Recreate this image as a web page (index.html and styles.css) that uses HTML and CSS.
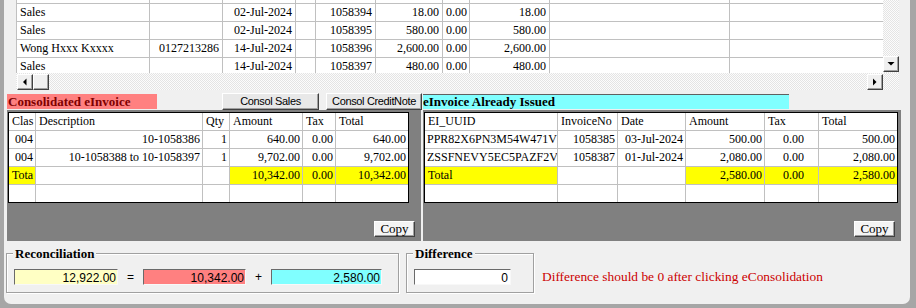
FILE: index.html
```html
<!DOCTYPE html>
<html>
<head>
<meta charset="utf-8">
<link rel="stylesheet" href="styles.css">
</head>
<body>
<div class="window">
  <div class="top">
    <div class="tgrid">
      <div class="rows">
        <div class="trow part"><div></div><div></div><div></div><div></div><div></div><div></div><div></div><div></div><div></div><div></div></div>
        <div class="trow"><div>Sales</div><div class="r"></div><div class="r">02-Jul-2024</div><div></div><div class="r">1058394</div><div class="r">18.00</div><div class="r">0.00</div><div class="r">18.00</div><div></div><div></div></div>
        <div class="trow"><div>Sales</div><div class="r"></div><div class="r">02-Jul-2024</div><div></div><div class="r">1058395</div><div class="r">580.00</div><div class="r">0.00</div><div class="r">580.00</div><div></div><div></div></div>
        <div class="trow"><div>Wong Hxxx Kxxxx</div><div class="r">0127213286</div><div class="r">14-Jul-2024</div><div></div><div class="r">1058396</div><div class="r">2,600.00</div><div class="r">0.00</div><div class="r">2,600.00</div><div></div><div></div></div>
        <div class="trow"><div>Sales</div><div class="r"></div><div class="r">14-Jul-2024</div><div></div><div class="r">1058397</div><div class="r">480.00</div><div class="r">0.00</div><div class="r">480.00</div><div></div><div></div></div>
      </div>
      <div class="vscroll">
        <div class="sbtn"><svg width="14" height="14" viewBox="0 0 14 14"><polygon points="3.5,5 10.5,5 7,8.5" fill="#000"/></svg></div>
      </div>
      <div class="hscroll">
        <div class="sbtn"><svg width="14" height="14" viewBox="0 0 14 14"><polygon points="8.5,3.5 8.5,10.5 5,7" fill="#000"/></svg></div>
        <div class="sbtn thumb"></div>
        <div class="track"></div>
        <div class="sbtn"><svg width="14" height="14" viewBox="0 0 14 14"><polygon points="5,3.5 5,10.5 8.5,7" fill="#000"/></svg></div>
      </div>
      <div class="corner"></div>
    </div>
  </div>

  <div class="labels">
    <div class="label red">Consolidated eInvoice</div>
    <div class="btn btn1">Consol Sales</div>
    <div class="btn btn2">Consol CreditNote</div>
    <div class="label cyan">eInvoice Already Issued</div>
  </div>

  <div class="panels">
    <div class="panel left">
      <div class="grid g1">
        <div class="grow head"><div>Clas</div><div>Description</div><div>Qty</div><div>Amount</div><div>Tax</div><div>Total</div></div>
        <div class="grow"><div class="r">004</div><div class="r">10-1058386</div><div class="r">1</div><div class="r">640.00</div><div class="r">0.00</div><div class="r">640.00</div></div>
        <div class="grow"><div class="r">004</div><div class="r">10-1058388 to 10-1058397</div><div class="r">1</div><div class="r">9,702.00</div><div class="r">0.00</div><div class="r">9,702.00</div></div>
        <div class="grow"><div class="y">Tota</div><div></div><div></div><div class="r y">10,342.00</div><div class="r y">0.00</div><div class="r y">10,342.00</div></div>
        <div class="grow last"><div></div><div></div><div></div><div></div><div></div><div></div></div>
      </div>
      <div class="copy">Copy</div>
    </div>
    <div class="panel right">
      <div class="grid g2">
        <div class="grow head"><div>EI_UUID</div><div>InvoiceNo</div><div>Date</div><div>Amount</div><div>Tax</div><div>Total</div></div>
        <div class="grow"><div class="uuid">PPR82X6PN3M54W471V</div><div class="r">1058385</div><div class="r">03-Jul-2024</div><div class="r">500.00</div><div class="r tax">0.00</div><div class="r">500.00</div></div>
        <div class="grow"><div class="uuid">ZSSFNEVY5EC5PAZF2V.</div><div class="r">1058387</div><div class="r">01-Jul-2024</div><div class="r">2,080.00</div><div class="r tax">0.00</div><div class="r">2,080.00</div></div>
        <div class="grow"><div class="y">Total</div><div></div><div></div><div class="r y">2,580.00</div><div class="r y tax">0.00</div><div class="r y">2,580.00</div></div>
        <div class="grow last"><div></div><div></div><div></div><div></div><div></div><div></div></div>
      </div>
      <div class="copy">Copy</div>
    </div>
  </div>

  <div class="bottom">
    <fieldset class="box recon">
      <legend>Reconciliation</legend>
      <div class="inrow">
        <div class="field f-yellow">12,922.00</div>
        <div class="op">=</div>
        <div class="field f-red">10,342.00</div>
        <div class="op">+</div>
        <div class="field f-cyan">2,580.00</div>
      </div>
    </fieldset>
    <fieldset class="box diff">
      <legend>Difference</legend>
      <div class="inrow">
        <div class="field f-white">0</div>
      </div>
    </fieldset>
    <div class="msg">Difference should be 0 after clicking eConsolidation</div>
  </div>
</div>
</body>
</html>
```

FILE: styles.css
```css
html, body {
  margin: 0;
  padding: 0;
}
body {
  width: 916px;
  height: 308px;
  overflow: hidden;
  background: #a6a6a6;
}
.window {
  margin-left: 4px;
  width: 906px;
  height: 304px;
  background: #f0f0f0;
  border-radius: 0 0 7px 7px;
  font-family: "Liberation Serif", "Times New Roman", serif;
  font-size: 12px;
  color: #000;
  overflow: hidden;
}

/* ---------- top list ---------- */
.top {
  height: 90px;
}
.tgrid {
  margin-left: 12px;
  display: grid;
  grid-template-columns: 867px 16px;
  grid-template-rows: 73px 17px;
}
.rows {
  background: #fff;
  border-left: 1px solid #c0c0c0;
  overflow: hidden;
}
.trow {
  display: grid;
  grid-template-columns: 133px 73px 73px 20px 60px 67px 27px 80px 180px 153px;
  height: 18px;
}
.trow.part {
  height: 4px;
}
.trow > div {
  box-sizing: border-box;
  border-right: 1px solid #c0c0c0;
  border-bottom: 1px solid #c0c0c0;
  padding: 0 3px;
  line-height: 17px;
  white-space: nowrap;
  overflow: hidden;
}
.trow > div:last-child {
  border-right: none;
}
.r {
  text-align: right;
}
.vscroll, .hscroll, .corner {
  background: repeating-conic-gradient(#e4e4e4 0 25%, #fcfcfc 0 50%) 0 0 / 2px 2px;
}
.vscroll {
  display: flex;
  flex-direction: column;
  justify-content: flex-end;
  padding-bottom: 1px;
  box-sizing: border-box;
}
.hscroll {
  display: flex;
  padding: 1px 0 0 1px;
  box-sizing: border-box;
}
.hscroll .track {
  flex: 1;
}
.sbtn {
  box-sizing: border-box;
  width: 16px;
  height: 16px;
  background: #f0f0f0;
  border: 1px solid;
  border-color: #fff #404040 #404040 #fff;
  box-shadow: inset -1px -1px 0 #a0a0a0;
  display: flex;
}
.sbtn svg {
  display: block;
}

/* ---------- labels ---------- */
.labels {
  display: flex;
  align-items: flex-start;
  height: 20px;
}
.label {
  box-sizing: border-box;
  height: 15px;
  margin-top: 4px;
  font-weight: bold;
  font-size: 13px;
  line-height: 15px;
  white-space: nowrap;
  overflow: hidden;
}
.label.red {
  margin-left: 3px;
  width: 150px;
  background: #ff8080;
  color: #800000;
  padding-left: 1px;
}
.label.cyan {
  margin-left: 1px;
  width: 366px;
  background: #80ffff;
  color: #000;
  border-top: 1px solid #606060;
  line-height: 14px;
}
.btn {
  box-sizing: border-box;
  height: 17px;
  margin-top: 3px;
  background: #e8e8e8;
  border: 1px solid;
  border-color: #fff #404040 #404040 #fff;
  box-shadow: inset -1px -1px 0 #a0a0a0;
  font-family: "Liberation Sans", Arial, sans-serif;
  font-size: 11px;
  letter-spacing: -0.35px;
  line-height: 15px;
  text-align: center;
  white-space: nowrap;
}
.btn1 {
  margin-left: 65px;
  width: 97px;
}
.btn2 {
  margin-left: 7px;
  width: 96px;
}

/* ---------- panels ---------- */
.panels {
  display: flex;
  height: 131px;
}
.panel {
  background: #808080;
  display: flex;
  flex-direction: column;
  align-items: flex-start;
}
.panel.left {
  margin-left: 3px;
  width: 414px;
}
.panel.right {
  margin-left: 2px;
  width: 478px;
}
.grid {
  margin: 2px 0 0 1px;
  background: #fff;
  border: 1px solid #000;
}
.grow {
  display: grid;
  height: 18px;
}
.g1 .grow {
  grid-template-columns: 27px 167px 27px 73px 33px 72px;
}
.g2 .grow {
  grid-template-columns: 133px 60px 68px 79px 54px 78px;
}
.grow > div {
  box-sizing: border-box;
  border-right: 1px solid #c0c0c0;
  border-bottom: 1px solid #c0c0c0;
  padding: 0 2px 0 3px;
  line-height: 17px;
  white-space: nowrap;
  overflow: hidden;
}
.grow > div:last-child {
  border-right: none;
}
.grow.last {
  height: 17px;
}
.grow.last > div {
  border-bottom: none;
}
.grow.head > div {
  padding-left: 3px;
}
.grow > div.uuid {
  padding-left: 2px;
  padding-right: 0;
}
.grow > div.tax {
  padding-right: 14px;
}
.y {
  background: #ffff00;
}
.copy {
  box-sizing: border-box;
  align-self: flex-end;
  margin: auto 6px 4px 0;
  width: 41px;
  height: 16px;
  background: #f4f4f4;
  border: 1px solid;
  border-color: #fff #404040 #404040 #fff;
  box-shadow: inset -1px -1px 0 #a0a0a0;
  font-size: 13px;
  line-height: 14px;
  text-align: center;
}

/* ---------- bottom ---------- */
.bottom {
  display: flex;
  align-items: flex-start;
  margin-top: 5px;
}
.box {
  margin: 0;
  padding: 8px 6px 7px 7px;
  border: 1px solid #a0a0a0;
  box-shadow: inset 1px 1px 0 #fff, 1px 1px 0 #fff;
  min-width: 0;
  box-sizing: border-box;
}
.box legend {
  margin-left: -1px;
  padding: 0 2px;
  font-weight: bold;
  font-size: 13px;
  line-height: 15px;
  background: #f0f0f0;
}
.recon {
  margin-left: 2px;
  width: 393px;
}
.diff {
  margin-left: 7px;
  width: 128px;
}
.inrow {
  display: flex;
  align-items: center;
  height: 16px;
}
.field {
  box-sizing: border-box;
  height: 16px;
  border: 1px solid;
  border-color: #6a6a6a #f8f8f8 #f8f8f8 #6a6a6a;
  font-family: "Liberation Sans", Arial, sans-serif;
  font-size: 12px;
  line-height: 14px;
  padding: 1px 1px 0 0;
  text-align: right;
  white-space: nowrap;
}
.f-yellow {
  width: 104px;
  background: #ffffc4;
}
.f-red {
  width: 103px;
  background: #ff8080;
}
.f-cyan {
  width: 111px;
  background: #80ffff;
}
.f-white {
  width: 97px;
  background: #fff;
  padding-right: 2px;
}
.op {
  width: 25px;
  text-align: center;
  font-family: "Liberation Sans", Arial, sans-serif;
  font-size: 12px;
}
.msg {
  margin: 23px 0 0 8px;
  color: #cc0000;
  font-size: 13.4px;
  line-height: 15px;
  white-space: nowrap;
}
```
